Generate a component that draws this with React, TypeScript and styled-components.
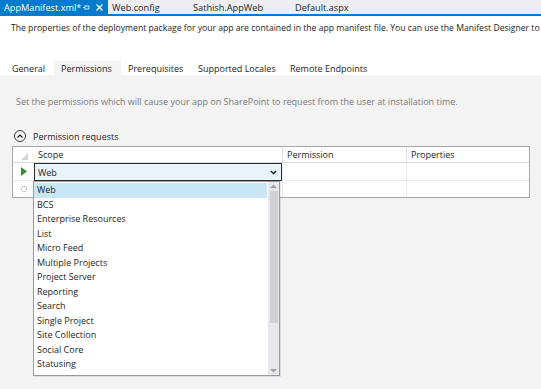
import styled, { createGlobalStyle } from "styled-components";

const GlobalStyle = createGlobalStyle`
  html, body {
    margin: 0;
    padding: 0;
    background: #ffffff;
  }
  body {
    width: 541px;
    height: 389px;
    overflow: hidden;
    font-family: "Open Sans", "Noto Sans", sans-serif;
    font-size: 9px;
    color: #1e1e1e;
  }
`;

const Page = styled.div`
  width: 541px;
  height: 389px;
  display: flex;
  flex-direction: column;
  overflow: hidden;
`;

const DocTabStrip = styled.div`
  height: 14px;
  display: flex;
  background: #eeeef2;
  border-bottom: 2px solid #007acc;
  flex-shrink: 0;
`;

const DocTab = styled.div<{ $active?: boolean; $width: number }>`
  width: ${(p) => p.$width}px;
  box-sizing: border-box;
  padding-left: 4px;
  display: flex;
  align-items: center;
  font-size: 9.2px;
  white-space: nowrap;
  background: ${(p) => (p.$active ? "#007acc" : "transparent")};
  color: ${(p) => (p.$active ? "#ffffff" : "#1e1e1e")};
`;

const TabIcons = styled.span`
  display: flex;
  align-items: center;
  gap: 6px;
  margin-left: 2px;
`;

const Description = styled.div`
  height: 45px;
  padding: 6px 0 0 11px;
  box-sizing: border-box;
  font-size: 8.65px;
  white-space: nowrap;
  overflow: hidden;
  flex-shrink: 0;
`;

const DesignerTabs = styled.div`
  height: 14px;
  display: flex;
  align-items: stretch;
  padding-left: 5px;
  flex-shrink: 0;
`;

const DesignerTab = styled.div<{ $selected?: boolean; $width: number }>`
  width: ${(p) => p.$width}px;
  box-sizing: border-box;
  padding-left: 7px;
  display: flex;
  align-items: center;
  white-space: nowrap;
  background: ${(p) => (p.$selected ? "#f3f3f3" : "transparent")};
`;

const Content = styled.div`
  flex: 1;
  background: #f3f3f3;
  padding: 20px 11px 0 12px;
`;

const Hint = styled.div`
  color: #7a7a7a;
  padding-left: 4px;
  white-space: nowrap;
  height: 33px;
`;

const SectionHeader = styled.div`
  display: flex;
  align-items: center;
  gap: 7px;
  padding-left: 2px;
  height: 16px;
  margin-bottom: 2px;
`;

const CollapseButton = styled.span`
  width: 12px;
  height: 12px;
  border: 1px solid #3c3c3c;
  border-radius: 50%;
  display: flex;
  align-items: center;
  justify-content: center;
  box-sizing: border-box;
`;

const GridWrap = styled.div`
  position: relative;
  width: 518px;
`;

const Grid = styled.div`
  display: grid;
  grid-template-columns: 21px 248px 124px 1fr;
  grid-template-rows: 16px 18px 16px;
  border: 1px solid #a9a9a9;
  background: #ffffff;
`;

const HeaderCell = styled.div<{ $divider?: boolean }>`
  display: flex;
  align-items: center;
  padding-left: 4px;
  border-bottom: 1px solid #d9d9d9;
  border-left: ${(p) => (p.$divider ? "1px solid #e0e0e0" : "none")};
`;

const RowHeader = styled.div<{ $last?: boolean }>`
  display: flex;
  align-items: center;
  justify-content: center;
  border-bottom: ${(p) => (p.$last ? "none" : "1px solid #e8e8e8")};
`;

const Cell = styled.div<{ $last?: boolean }>`
  border-left: 1px solid #e8e8e8;
  border-bottom: ${(p) => (p.$last ? "none" : "1px solid #e8e8e8")};
`;

const Combo = styled.div`
  border: 1px solid #2d2d30;
  background: #e9f3fa;
  display: flex;
  align-items: center;
  justify-content: space-between;
  padding: 0 4px 0 3px;
  box-sizing: border-box;
`;

const DropList = styled.div`
  position: absolute;
  left: 21px;
  top: 35px;
  width: 247px;
  height: 195px;
  box-sizing: border-box;
  border: 1px solid #9a9a9a;
  background: #ffffff;
  display: flex;
  overflow: hidden;
  box-shadow: 1px 1px 1px rgba(0, 0, 0, 0.08);
`;

const Items = styled.div`
  flex: 1;
  padding-top: 1px;
`;

const Item = styled.div<{ $selected?: boolean }>`
  height: 14.5px;
  line-height: 14.5px;
  padding-left: 3px;
  margin-right: 1px;
  background: ${(p) => (p.$selected ? "#c9e6f6" : "transparent")};
  white-space: nowrap;
`;

const ScrollBar = styled.div`
  width: 11px;
  background: #e8e8ec;
  display: flex;
  flex-direction: column;
  align-items: center;
  padding: 2px 0;
  box-sizing: border-box;
`;

const Thumb = styled.div`
  width: 8px;
  height: 132px;
  background: #d0d0d5;
  margin: 3px 0 auto;
`;

const scopes = [
  "Web",
  "BCS",
  "Enterprise Resources",
  "List",
  "Micro Feed",
  "Multiple Projects",
  "Project Server",
  "Reporting",
  "Search",
  "Single Project",
  "Site Collection",
  "Social Core",
  "Statusing",
  "Taxonomy",
];

const docTabs = [
  { label: "Web.config", width: 81 },
  { label: "Sathish.AppWeb", width: 102 },
  { label: "Default.aspx", width: 90 },
];

const designerTabs = [
  { label: "General", width: 49 },
  { label: "Permissions", width: 67, selected: true },
  { label: "Prerequisites", width: 70 },
  { label: "Supported Locales", width: 92 },
  { label: "Remote Endpoints", width: 100 },
];

export default function App() {
  return (
    <Page>
      <GlobalStyle />
      <DocTabStrip>
        <DocTab $active $width={108}>
          AppManifest.xml*
          <TabIcons>
            <svg width="7" height="7" viewBox="0 0 7 7">
              <path d="M0 3.5h2M2 1.5v4M2 2h4v3H2" stroke="#cfe6f7" fill="none" strokeWidth="1" />
            </svg>
            <svg width="7" height="7" viewBox="0 0 7 7">
              <path d="M0.5 0.5l6 6M6.5 0.5l-6 6" stroke="#ffffff" strokeWidth="1.3" />
            </svg>
          </TabIcons>
        </DocTab>
        {docTabs.map((t) => (
          <DocTab key={t.label} $width={t.width}>
            {t.label}
          </DocTab>
        ))}
      </DocTabStrip>
      <Description>
        The properties of the deployment package for your app are contained in the app manifest file.
        You can use the Manifest Designer to set or modify the properties.
      </Description>
      <DesignerTabs>
        {designerTabs.map((t) => (
          <DesignerTab key={t.label} $width={t.width} $selected={t.selected}>
            {t.label}
          </DesignerTab>
        ))}
      </DesignerTabs>
      <Content>
        <Hint>
          Set the permissions which will cause your app on SharePoint to request from the user at
          installation time.
        </Hint>
        <SectionHeader>
          <CollapseButton>
            <svg width="6" height="4" viewBox="0 0 6 4">
              <path d="M0.5 3.5L3 1l2.5 2.5" stroke="#1e1e1e" strokeWidth="1.2" fill="none" />
            </svg>
          </CollapseButton>
          Permission requests
        </SectionHeader>
        <GridWrap>
          <Grid>
            <HeaderCell>
              <svg width="12" height="12" viewBox="0 0 12 12">
                <path d="M11 4v7H4z" fill="#d4d4d4" />
              </svg>
            </HeaderCell>
            <HeaderCell>Scope</HeaderCell>
            <HeaderCell $divider>Permission</HeaderCell>
            <HeaderCell $divider>Properties</HeaderCell>

            <RowHeader>
              <svg width="6" height="9" viewBox="0 0 6 9">
                <path d="M0 0l6 4.5L0 9z" fill="#3c8a2e" />
              </svg>
            </RowHeader>
            <Combo>
              Web
              <svg width="7" height="5" viewBox="0 0 7 5">
                <path d="M0.8 1l2.7 2.6L6.2 1" stroke="#1e1e1e" strokeWidth="1.4" fill="none" />
              </svg>
            </Combo>
            <Cell />
            <Cell />

            <RowHeader $last>
              <svg width="8" height="8" viewBox="0 0 8 8">
                <circle cx="4" cy="4" r="2.6" stroke="#b5b5b5" strokeWidth="1.2" fill="none" strokeDasharray="1.4 0.9" />
              </svg>
            </RowHeader>
            <Cell $last />
            <Cell $last />
            <Cell $last />
          </Grid>
          <DropList>
            <Items>
              {scopes.map((s, i) => (
                <Item key={s} $selected={i === 0}>
                  {s}
                </Item>
              ))}
            </Items>
            <ScrollBar>
              <svg width="7" height="4" viewBox="0 0 7 4">
                <path d="M0 4L3.5 0.5L7 4z" fill="#a0a0a0" />
              </svg>
              <Thumb />
              <svg width="7" height="4" viewBox="0 0 7 4">
                <path d="M0 0L3.5 3.5L7 0z" fill="#a0a0a0" />
              </svg>
            </ScrollBar>
          </DropList>
        </GridWrap>
      </Content>
    </Page>
  );
}
